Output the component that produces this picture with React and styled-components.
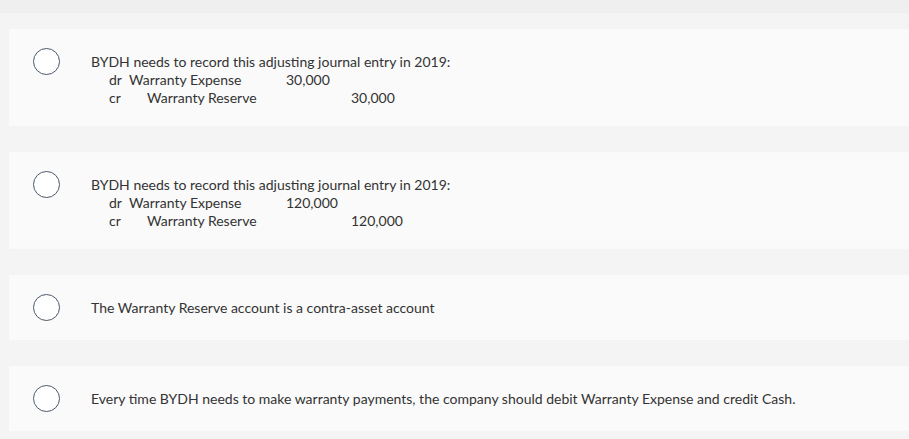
import React from 'react';
import styled, { createGlobalStyle } from 'styled-components';

const GlobalStyle = createGlobalStyle`
  html, body {
    margin: 0;
    padding: 0;
    background: #f4f4f4;
  }
  body {
    font-family: Lato, "Open Sans", sans-serif;
    color: #333;
  }
`;

const Page = styled.div`
  width: 909px;
  height: 439px;
  overflow: hidden;
  background: #f4f4f4;
`;

const TopBand = styled.div`
  height: 13px;
  background: #efefef;
`;

const List = styled.div`
  display: flex;
  flex-direction: column;
  gap: 26px;
  padding: 16px 0 0 9px;
`;

const Card = styled.div`
  display: flex;
  align-items: flex-start;
  background: #fafafa;
  padding: 19px 0 19px 24px;
  margin-right: -10px;
`;

const Radio = styled.span`
  flex: none;
  width: 25px;
  height: 25px;
  border-radius: 50%;
  border: 1.5px solid #4a5869;
  background: #fff;
`;

const Body = styled.div`
  padding: 5px 0 0 31px;
  font-size: 14px;
  line-height: 18px;
  color: #333;
  white-space: nowrap;
`;

const EntryRow = styled.div`
  display: grid;
  grid-template-columns: ${p => (p.credit ? '38px 204px' : '20px 157px')} auto;
  padding-left: 18px;
`;

const entries = [
  { amount: '30,000' },
  { amount: '120,000' },
];

function Entry({ amount }) {
  return (
    <>
      BYDH needs to record this adjusting journal entry in 2019:
      <EntryRow>
        <span>dr</span>
        <span>Warranty Expense</span>
        <span>{amount}</span>
      </EntryRow>
      <EntryRow credit>
        <span>cr</span>
        <span>Warranty Reserve</span>
        <span>{amount}</span>
      </EntryRow>
    </>
  );
}

export default function App() {
  return (
    <Page>
      <GlobalStyle />
      <TopBand />
      <List>
        {entries.map(e => (
          <Card key={e.amount}>
            <Radio />
            <Body>
              <Entry amount={e.amount} />
            </Body>
          </Card>
        ))}
        <Card>
          <Radio />
          <Body>The Warranty Reserve account is a contra-asset account</Body>
        </Card>
        <Card>
          <Radio />
          <Body>
            Every time BYDH needs to make warranty payments, the company should debit Warranty Expense and credit Cash.
          </Body>
        </Card>
      </List>
    </Page>
  );
}
